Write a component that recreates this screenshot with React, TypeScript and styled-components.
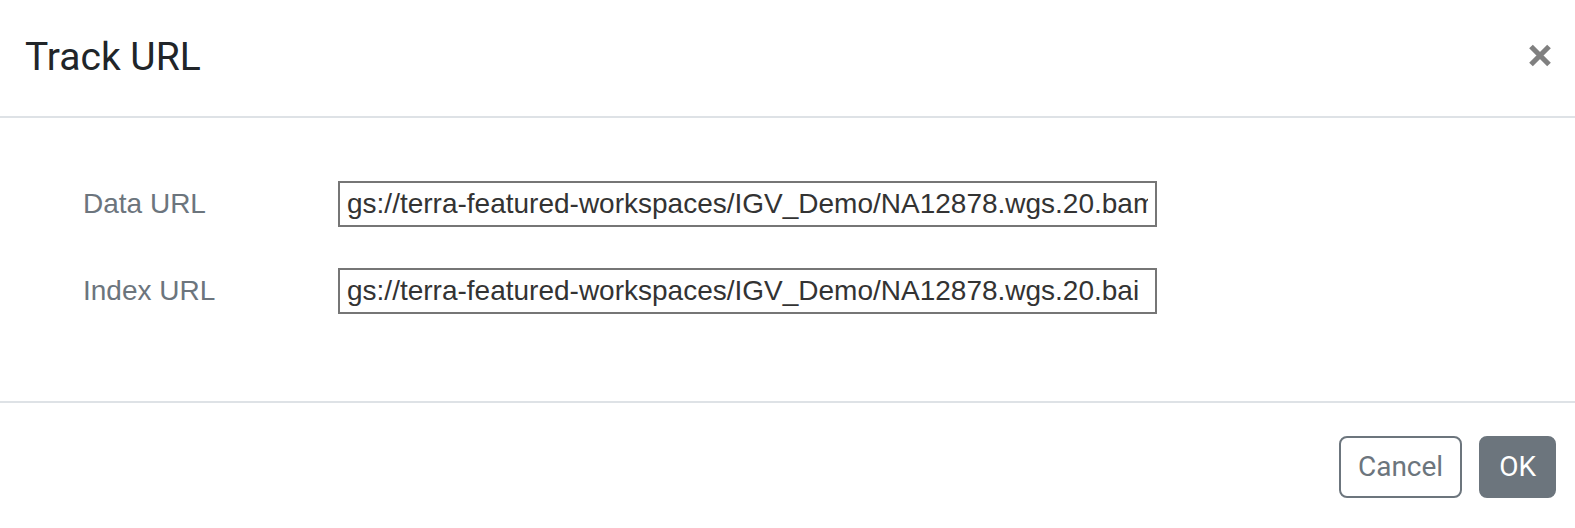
import React, {useState} from 'react';
import styled, {createGlobalStyle} from 'styled-components';

const GlobalStyle = createGlobalStyle`
  html, body {
    margin: 0;
    padding: 0;
    background: #fff;
  }
  body {
    font-family: "Liberation Sans", Arial, sans-serif;
  }
`;

type Field = {
    label: string;
    value: string;
};

const initialFields: Field[] = [
    {label: 'Data URL', value: 'gs://terra-featured-workspaces/IGV_Demo/NA12878.wgs.20.bam'},
    {label: 'Index URL', value: 'gs://terra-featured-workspaces/IGV_Demo/NA12878.wgs.20.bai'},
];

export default function App() {
    const [fields, setFields] = useState(initialFields);

    const updateField = (index: number, value: string) => {
        setFields((prev) => prev.map((f, i) => (i === index ? {...f, value} : f)));
    };

    return (
        <>
            <GlobalStyle/>
            <Modal>
                <Header>
                    <Title>{'Track URL'}</Title>
                    <CloseButton aria-label='Close'>
                        <svg
                            width='24'
                            height='23'
                            viewBox='0 0 24 23'
                        >
                            <path
                                d='M3 2.5 L21 20.5 M21 2.5 L3 20.5'
                                stroke='currentColor'
                                strokeWidth='5.2'
                                strokeLinecap='butt'
                            />
                        </svg>
                    </CloseButton>
                </Header>
                <Body>
                    {fields.map((field, i) => (
                        <Row key={field.label}>
                            <Label>{field.label}</Label>
                            <UrlInput
                                type='text'
                                value={field.value}
                                onChange={(e) => updateField(i, e.target.value)}
                            />
                        </Row>
                    ))}
                </Body>
                <Footer>
                    <Button>{'Cancel'}</Button>
                    <Button $primary={true}>{'OK'}</Button>
                </Footer>
            </Modal>
        </>
    );
}

const Modal = styled.div`
  width: 1575px;
  height: 528px;
  display: flex;
  flex-direction: column;
  background: #fff;
  overflow: hidden;
`;

const Header = styled.div`
  height: 118px;
  flex-shrink: 0;
  box-sizing: border-box;
  display: flex;
  align-items: flex-start;
  justify-content: space-between;
  padding: 34px 23px 0 25px;
  border-bottom: 2px solid #dee2e6;
`;

const Title = styled.h5`
  margin: 0;
  font-family: Roboto, "Liberation Sans", sans-serif;
  font-size: 39px;
  font-weight: 400;
  line-height: 46px;
  color: #212529;
`;

const CloseButton = styled.button`
  margin-top: 10px;
  padding: 0;
  border: 0;
  background: transparent;
  color: #808080;
  display: flex;
  cursor: pointer;
`;

const Body = styled.div`
  height: 285px;
  flex-shrink: 0;
  box-sizing: border-box;
  display: flex;
  flex-direction: column;
  gap: 41px;
  padding: 63px 0 0 83px;
  border-bottom: 2px solid #dee2e6;
`;

const Row = styled.div`
  display: flex;
  align-items: center;
`;

const Label = styled.label`
  width: 255px;
  font-size: 28px;
  line-height: 34px;
  color: #6c757d;
`;

const UrlInput = styled.input`
  width: 819px;
  height: 46px;
  box-sizing: border-box;
  margin: 0;
  padding: 0 7px;
  border: 2px solid #767676;
  border-radius: 0;
  font-family: "Liberation Sans", Arial, sans-serif;
  font-size: 28px;
  color: #333;
  background: #fff;
  outline: none;
`;

const Footer = styled.div`
  flex: 1;
  display: flex;
  align-items: flex-start;
  justify-content: flex-end;
  gap: 17px;
  padding: 33px 19px 0 0;
`;

const Button = styled.button<{$primary?: boolean}>`
  height: 62px;
  box-sizing: border-box;
  padding: 0 ${(p) => (p.$primary ? '18px' : '17px')};
  border: 2px solid #6c757d;
  border-radius: 8px;
  font-family: Roboto, "Liberation Sans", sans-serif;
  font-size: 28px;
  line-height: 1;
  cursor: pointer;
  color: ${(p) => (p.$primary ? '#fff' : '#6c757d')};
  background: ${(p) => (p.$primary ? '#6c757d' : '#fff')};
`;
